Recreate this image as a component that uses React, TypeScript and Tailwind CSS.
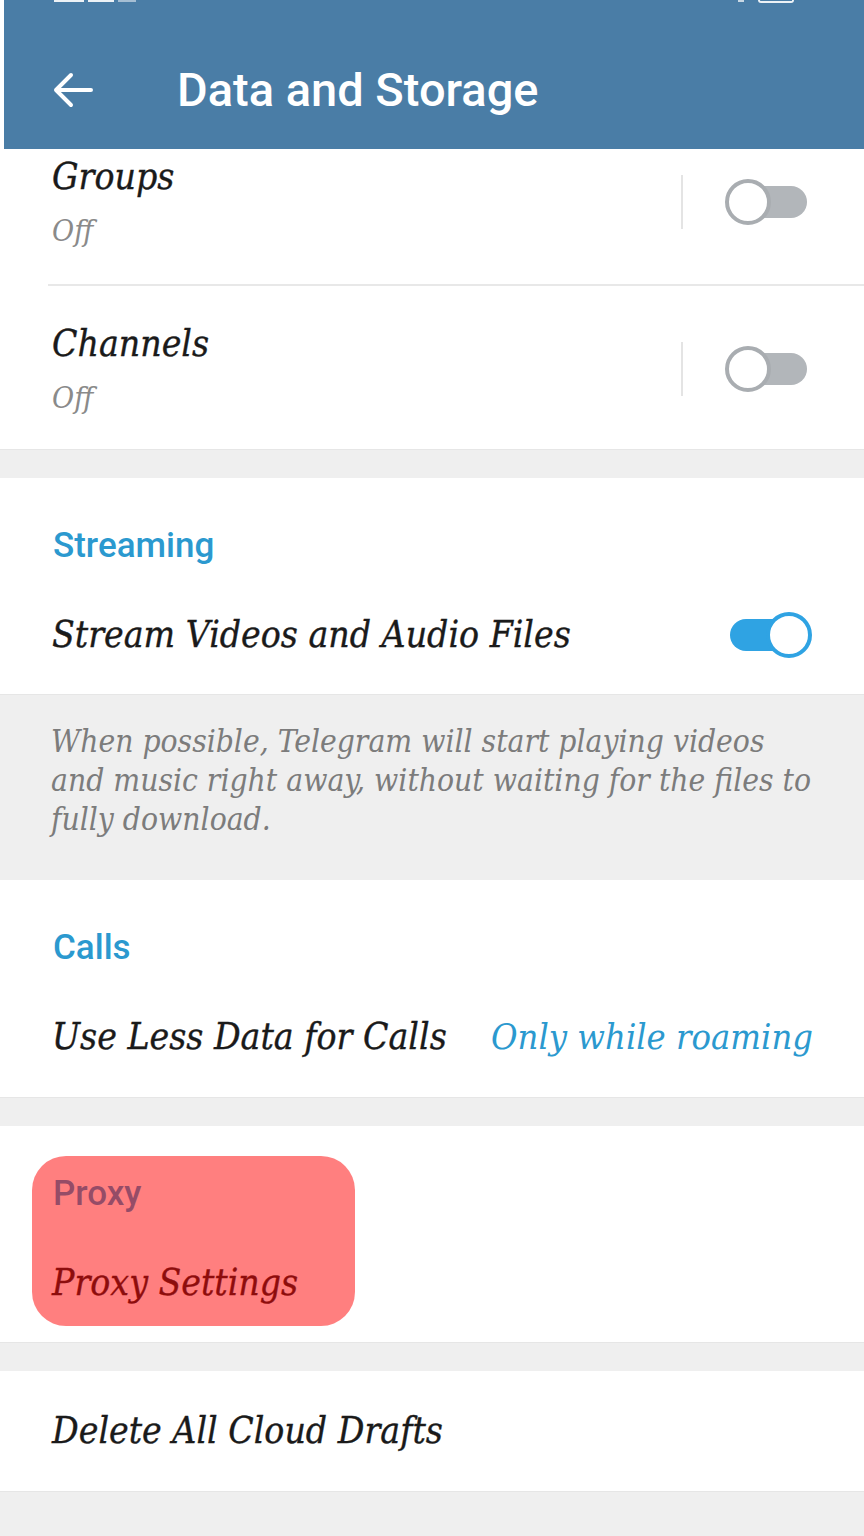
import React from "react";

const serif = "font-['DejaVu_Serif_Condensed','DejaVu_Serif',serif] font-stretch-condensed italic";
const sans = "font-['Roboto','Noto_Sans',sans-serif]";
const ink = "text-[#1a1a1a] [-webkit-text-stroke:0.35px_#1a1a1a]";

const Toggle = ({ on }: { on: boolean }) => {
    if (on) {
        return (
            <div className="relative w-[82px] h-[46px] flex items-center">
                <div className="w-[62px] h-[32px] rounded-full bg-[#2fa3e3]" />
                <div className="absolute right-0 top-0 w-[46px] h-[46px] rounded-full bg-white border-[4px] border-[#2fa3e3]" />
            </div>
        );
    }
    return (
        <div className="relative w-[82px] h-[46px] flex items-center justify-end">
            <div className="w-[62px] h-[32px] rounded-full bg-[#b2b6ba]" />
            <div className="absolute left-0 top-0 w-[46px] h-[46px] rounded-full bg-white border-[4px] border-[#a9adb1]" />
        </div>
    );
};

const ToggleRow = ({ title, value }: { title: string; value: string }) => (
    <div className="h-[165px] flex items-center pl-[52px] pr-[57px]">
        <div className="flex-1 flex flex-col gap-[10px] pt-[5px]">
            <div className={`${serif} ${ink} text-[37px] leading-[44px]`}>{title}</div>
            <div className={`${serif} text-[30px] leading-[44px] text-[#8a8a8a]`}>{value}</div>
        </div>
        <div className="w-[2px] h-[54px] bg-[#e4e4e4] mr-[42px]" />
        <Toggle on={false} />
    </div>
);

const SectionTitle = ({ children }: { children: React.ReactNode }) => (
    <div className={`${sans} pt-[50px] pl-[53px] h-[86px] text-[35px] leading-[36px] font-medium text-[#2b99cf]`}>
        {children}
    </div>
);

const Gap = () => <div className="h-[29px] bg-[#efefef] border-t border-[#e6e6e6]" />;

export default function App() {
    return (
        <div className="w-[864px] h-[1536px] bg-[#efefef] overflow-hidden">
            {/* top bar */}
            <div className="bg-white pl-[4px]">
                <div className="h-[149px] bg-[#4a7da6] relative z-10">
                    <div className="h-[3px] flex items-start pl-[50px] gap-[4px]">
                        <div className="w-[30px] h-[2px] bg-white/90" />
                        <div className="w-[26px] h-[2px] bg-white/90" />
                        <div className="w-[18px] h-[2px] bg-white/50" />
                        <div className="flex-1" />
                        <div className="w-[6px] h-[2px] bg-white/70" />
                        <div className="w-[36px] h-[3px] border-b-2 border-x-2 border-white/90 rounded-b-[3px] mr-[70px] ml-[10px]" />
                    </div>
                    <div className="h-[146px] flex items-center -mt-[3px] pt-[34px]">
                        <svg width="40" height="36" viewBox="0 0 40 36" className="ml-[49px]">
                            <path d="M3 18 H38 M3 18 L18 3 M3 18 L18 33" stroke="white" strokeWidth="4" fill="none" strokeLinecap="round" strokeLinejoin="round" />
                        </svg>
                        <div className={`${sans} ml-[84px] text-white text-[47px] font-medium`}>Data and Storage</div>
                    </div>
                </div>
            </div>

            {/* auto-download list, scrolled a little under the bar */}
            <div className="bg-white h-[300px] overflow-hidden">
                <div className="-mt-[30px]">
                    <ToggleRow title="Groups" value="Off" />
                    <div className="ml-[48px] h-[2px] bg-[#e8e8e8]" />
                    <ToggleRow title="Channels" value="Off" />
                </div>
            </div>
            <Gap />

            {/* streaming */}
            <div className="bg-white h-[216px]">
                <SectionTitle>Streaming</SectionTitle>
                <div className="h-[130px] pt-[12px] flex items-center pl-[52px] pr-[52px]">
                    <div className={`${serif} ${ink} flex-1 text-[37px]`}>Stream Videos and Audio Files</div>
                    <Toggle on={true} />
                </div>
            </div>
            <div className={`${serif} bg-[#efefef] border-t border-[#e6e6e6] h-[186px] pt-[27px] pl-[51px] pr-[44px] text-[31.5px] leading-[39px] text-[#7c7c7c]`}>
                When possible, Telegram will start playing videos and music right away, without waiting for the files to fully download.
            </div>

            {/* calls */}
            <div className="bg-white h-[217px]">
                <SectionTitle>Calls</SectionTitle>
                <div className="h-[130px] pt-[12px] flex items-center justify-between pl-[52px] pr-[51px]">
                    <div className={`${serif} ${ink} text-[37px]`}>Use Less Data for Calls</div>
                    <div className={`${serif} text-[36px] text-[#2b99cf]`}>Only while roaming</div>
                </div>
            </div>
            <Gap />

            {/* proxy */}
            <div className="bg-white h-[216px] relative">
                <SectionTitle>Proxy</SectionTitle>
                <div className="h-[130px] pt-[12px] flex items-center pl-[52px]">
                    <div className={`${serif} ${ink} text-[37px]`}>Proxy Settings</div>
                </div>
                <div className="absolute left-[32px] top-[30px] w-[323px] h-[170px] rounded-[34px] bg-[rgba(255,0,0,0.5)] pointer-events-none" />
            </div>
            <Gap />

            <div className="bg-white h-[120px] flex items-center pl-[52px]">
                <div className={`${serif} ${ink} text-[37px]`}>Delete All Cloud Drafts</div>
            </div>
            <div className="border-t border-[#e6e6e6]" />
        </div>
    );
}
